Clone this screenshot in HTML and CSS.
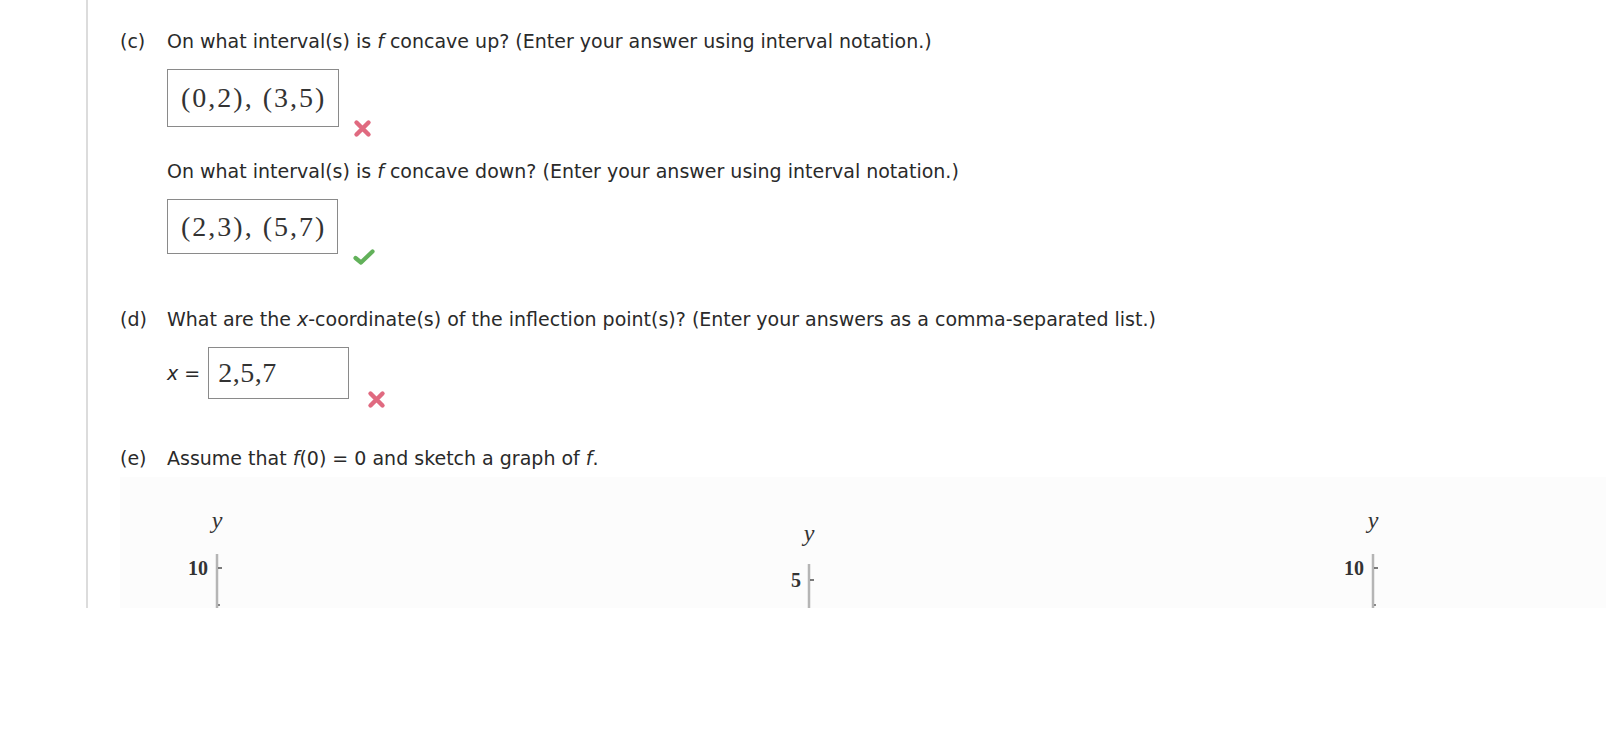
FILE: index.html
```html
<!DOCTYPE html>
<html>
<head>
<meta charset="utf-8">
<link rel="stylesheet" href="styles.css">
</head>
<body>
<div class="page">
  <div class="part part-c">
    <span class="label">(c)</span>
    <div class="body">
      <p class="q">On what interval(s) is <i>f</i> concave up? (Enter your answer using interval notation.)</p>
      <div class="answer-row">
        <div class="box box-c1"><span class="math">(0,2), (3,5)</span></div>
        <span class="mark wrong"><svg width="19" height="19" viewBox="0 0 19 19"><path d="M3.5 3.5 L15.5 15.5 M15.5 3.5 L3.5 15.5" stroke="#e06a80" stroke-width="4.4" stroke-linecap="round"/></svg></span>
      </div>
      <p class="q q-sub">On what interval(s) is <i>f</i> concave down? (Enter your answer using interval notation.)</p>
      <div class="answer-row">
        <div class="box box-c2"><span class="math">(2,3), (5,7)</span></div>
        <span class="mark right"><svg width="24" height="18" viewBox="0 0 24 18"><path d="M3.5 10 L9 14.5 L20.5 3.5" fill="none" stroke="#62b15a" stroke-width="4.2" stroke-linecap="round" stroke-linejoin="round"/></svg></span>
      </div>
    </div>
  </div>

  <div class="part part-d">
    <span class="label">(d)</span>
    <div class="body">
      <p class="q">What are the <i>x</i>-coordinate(s) of the inflection point(s)? (Enter your answers as a comma-separated list.)</p>
      <div class="answer-row">
        <span class="var"><i>x</i> =</span>
        <div class="box box-d"><span class="math math-d">2,5,7</span></div>
        <span class="mark wrong mark-d"><svg width="19" height="19" viewBox="0 0 19 19"><path d="M3.5 3.5 L15.5 15.5 M15.5 3.5 L3.5 15.5" stroke="#e06a80" stroke-width="4.4" stroke-linecap="round"/></svg></span>
      </div>
    </div>
  </div>

  <div class="part part-e">
    <span class="label">(e)</span>
    <div class="body">
      <p class="q">Assume that <i>f</i>(0) = 0 and sketch a graph of <i>f</i>.</p>
    </div>
  </div>

  <div class="graphs">
    <svg class="graph g1" width="100" height="160" viewBox="0 0 100 160">
      <text x="60" y="51" class="ylab" text-anchor="middle">y</text>
      <line x1="60" y1="77" x2="60" y2="160" stroke="#b5b5b5" stroke-width="2.5"/>
      <line x1="61" y1="91" x2="65" y2="91" stroke="#444" stroke-width="1.4"/>
      <line x1="61" y1="128" x2="63" y2="128" stroke="#666" stroke-width="1.4"/>
      <text x="51" y="98" class="tick" text-anchor="end">10</text>
    </svg>
    <svg class="graph g2" width="100" height="160" viewBox="0 0 100 160">
      <text x="60" y="64" class="ylab" text-anchor="middle">y</text>
      <line x1="60" y1="87" x2="60" y2="160" stroke="#b5b5b5" stroke-width="2.5"/>
      <line x1="61" y1="103" x2="65" y2="103" stroke="#444" stroke-width="1.4"/>
      <text x="52" y="110" class="tick" text-anchor="end">5</text>
    </svg>
    <svg class="graph g3" width="100" height="160" viewBox="0 0 100 160">
      <text x="60" y="51" class="ylab" text-anchor="middle">y</text>
      <line x1="60" y1="77" x2="60" y2="160" stroke="#b5b5b5" stroke-width="2.5"/>
      <line x1="61" y1="91" x2="65" y2="91" stroke="#444" stroke-width="1.4"/>
      <line x1="61" y1="128" x2="63" y2="128" stroke="#666" stroke-width="1.4"/>
      <text x="51" y="98" class="tick" text-anchor="end">10</text>
    </svg>
  </div>
</div>
</body>
</html>
```

FILE: styles.css
```css
html, body {
  margin: 0;
  padding: 0;
  background: #ffffff;
}

body {
  font-family: "DejaVu Sans", Verdana, sans-serif;
  font-size: 19px;
  color: #2a2a2a;
}

.page {
  margin-left: 86px;
  height: 608px;
  overflow: hidden;
  border-left: 2px solid #dcdcdc;
  padding-left: 32px;
  padding-top: 30px;
  box-sizing: border-box;
}

.part {
  display: flex;
  align-items: flex-start;
}

.label {
  width: 47px;
  flex: none;
  line-height: 22px;
}

.body {
  display: flex;
  flex-direction: column;
  align-items: flex-start;
}

.q {
  margin: 0;
  line-height: 22px;
  white-space: nowrap;
}

.q-sub {
  margin-top: 33px;
}

.answer-row {
  display: flex;
  align-items: flex-end;
  margin-top: 17px;
}

.box {
  border: 1px solid #8a8a8a;
  box-sizing: border-box;
  display: flex;
  align-items: center;
  background: #fff;
}

.box-c1 {
  width: 172px;
  height: 58px;
  padding-left: 13px;
}

.box-c2 {
  width: 171px;
  height: 55px;
  padding-left: 13px;
}

.box-d {
  width: 141px;
  height: 52px;
  padding-left: 9px;
}

.math {
  font-family: "Liberation Serif", "Times New Roman", serif;
  font-size: 28px;
  letter-spacing: 2px;
  color: #333;
  line-height: 32px;
}

.math-d {
  letter-spacing: 0.5px;
}

.var {
  align-self: center;
  margin-right: 8px;
  line-height: 22px;
}

.mark {
  display: flex;
  margin-left: 14px;
  margin-bottom: -11px;
}

.mark.right {
  margin-left: 14px;
  margin-bottom: -12px;
}

.mark.mark-d {
  margin-left: 18px;
  margin-bottom: -10px;
}

.part-d {
  margin-top: 54px;
}

.part-e {
  margin-top: 48px;
}

.graphs {
  display: flex;
  margin-top: 8px;
  height: 200px;
  background: #fcfcfc;
}

.graph {
  flex: none;
}

.g1 { margin-left: 37px; }
.g2 { margin-left: 492px; }
.g3 { margin-left: 464px; }

.ylab {
  font-family: "Liberation Serif", serif;
  font-style: italic;
  font-size: 24px;
  fill: #333;
}

.tick {
  font-family: "Liberation Serif", serif;
  font-size: 20px;
  font-weight: bold;
  fill: #333;
}
```
